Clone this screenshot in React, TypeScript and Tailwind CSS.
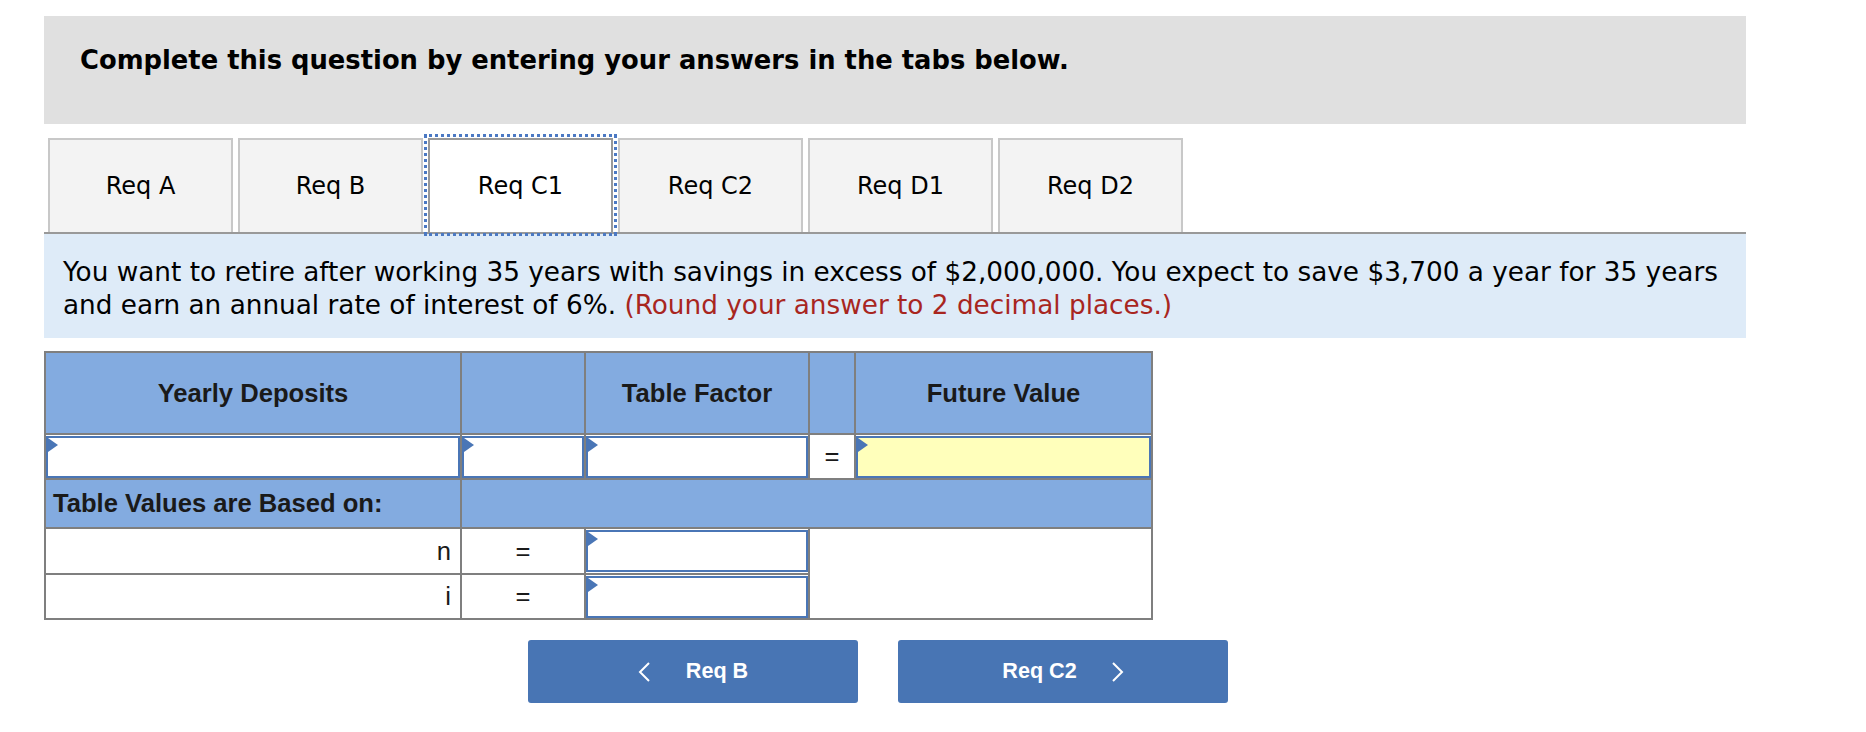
import React from "react";

const TABS = ["Req A", "Req B", "Req C1", "Req C2", "Req D1", "Req D2"];
const ACTIVE = "Req C1";

// Blue-framed answer box with the little flag in its top-left corner.
function AnswerInput({ yellow = false }: { yellow?: boolean }) {
  return (
    <div
      className={
        "relative h-[42px] w-full border-2 border-[#4a76b6] " +
        (yellow ? "bg-[#ffffbb]" : "bg-white")
      }
    >
      <svg
        className="absolute left-0 top-0"
        width="10"
        height="14"
        viewBox="0 0 10 14"
        aria-hidden
      >
        <polygon points="0,0 10,7 0,14" fill="#4a76b6" />
      </svg>
    </div>
  );
}

function Chevron({ dir }: { dir: "left" | "right" }) {
  return (
    <svg width="13" height="20" viewBox="0 0 13 20" aria-hidden>
      <polyline
        points={dir === "left" ? "11,1 2,10 11,19" : "2,1 11,10 2,19"}
        fill="none"
        stroke="white"
        strokeWidth="2"
      />
    </svg>
  );
}

export default function App() {
  const cell = "border-2 border-[#7f7f7f]";

  return (
    <div className="min-h-[732px] bg-white pl-[44px] pt-[16px] text-[#111]">
      <div className="w-[1702px]">
        {/* Instruction banner */}
        <div className="h-[108px] bg-[#e0e0e0] pl-[36px] pt-[25px]">
          <h1 className="font-['DejaVu_Sans',sans-serif] text-[25.8px] font-bold text-black">
            Complete this question by entering your answers in the tabs below.
          </h1>
        </div>

        {/* Tabs */}
        <div className="mt-[14px] flex gap-[5px] pl-[4px]">
          {TABS.map((t) => {
            const active = t === ACTIVE;
            return (
              <button
                key={t}
                type="button"
                className={
                  active
                    ? "flex h-[94px] w-[185px] items-center justify-center border-2 border-b-0 border-[#999] bg-white font-['DejaVu_Sans',sans-serif] text-[24px] text-black outline-[3px] outline-offset-[1px] outline-dotted outline-[#4b79c3]"
                    : "flex h-[94px] w-[185px] items-center justify-center border-2 border-b-0 border-[#c8c8c8] bg-[#f3f3f3] font-['DejaVu_Sans',sans-serif] text-[24px] text-black"
                }
              >
                {t}
              </button>
            );
          })}
        </div>

        {/* Question text */}
        <div className="border-t-2 border-[#999] bg-[#deebf8] px-[19px] pb-[16px] pt-[22px] font-['DejaVu_Sans',sans-serif] text-[26.3px] leading-[33px] text-black">
          <span>
            You want to retire after working 35 years with savings in excess of $2,000,000. You
            expect to save $3,700 a year for 35 years
          </span>
          <br />
          <span>and earn an annual rate of interest of 6%.</span>{" "}
          <span className="text-[#a8261f]">(Round your answer to 2 decimal places.)</span>
        </div>

        {/* Worksheet */}
        <table className="mt-[13px] w-[1107px] table-fixed border-collapse font-['Liberation_Sans',Arial,sans-serif] text-[25.6px] text-[#1a1a1a]">
          <colgroup>
            <col className="w-[416px]" />
            <col className="w-[124px]" />
            <col className="w-[224px]" />
            <col className="w-[46px]" />
            <col className="w-[297px]" />
          </colgroup>
          <tbody>
            <tr className="h-[82px] bg-[#83abe0] font-bold">
              <td className={cell + " text-center"}>Yearly Deposits</td>
              <td className={cell}></td>
              <td className={cell + " text-center"}>Table Factor</td>
              <td className={cell}></td>
              <td className={cell + " text-center"}>Future Value</td>
            </tr>
            <tr className="h-[45px]">
              <td className={cell + " p-0"}>
                <AnswerInput />
              </td>
              <td className={cell + " p-0"}>
                <AnswerInput />
              </td>
              <td className={cell + " p-0"}>
                <AnswerInput />
              </td>
              <td className={cell + " bg-white text-center"}>=</td>
              <td className={cell + " p-0"}>
                <AnswerInput yellow />
              </td>
            </tr>
            <tr className="h-[49px] bg-[#83abe0]">
              <td className={cell + " pl-[7px] font-bold"}>Table Values are Based on:</td>
              <td className={cell} colSpan={4}></td>
            </tr>
            <tr className="h-[46px]">
              <td className={cell + " pr-[9px] text-right"}>n</td>
              <td className={cell + " text-center"}>=</td>
              <td className={cell + " p-0"}>
                <AnswerInput />
              </td>
              <td className={cell} colSpan={2} rowSpan={2}></td>
            </tr>
            <tr className="h-[45px]">
              <td className={cell + " pr-[9px] text-right"}>i</td>
              <td className={cell + " text-center"}>=</td>
              <td className={cell + " p-0"}>
                <AnswerInput />
              </td>
            </tr>
          </tbody>
        </table>

        {/* Prev / next */}
        <div className="mt-[20px] flex gap-[40px] pl-[484px]">
          <button
            type="button"
            className="flex h-[63px] w-[330px] items-center justify-center gap-[35px] rounded-[3px] bg-[#4875b4] font-['Liberation_Sans',Arial,sans-serif] text-[21.6px] font-bold text-white"
          >
            <Chevron dir="left" />
            <span>Req B</span>
          </button>
          <button
            type="button"
            className="flex h-[63px] w-[330px] items-center justify-center gap-[34px] rounded-[3px] bg-[#4875b4] font-['Liberation_Sans',Arial,sans-serif] text-[21.6px] font-bold text-white"
          >
            <span>Req C2</span>
            <Chevron dir="right" />
          </button>
        </div>
      </div>
    </div>
  );
}
